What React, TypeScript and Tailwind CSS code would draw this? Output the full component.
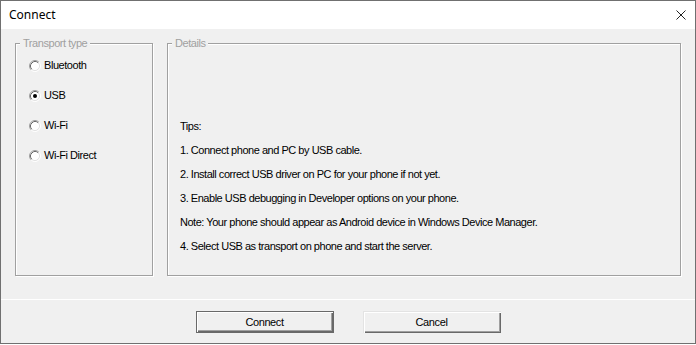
import React from "react";

const ui = { fontFamily: '"Liberation Sans", Arial, sans-serif' };

const Radio = ({ checked = false }: { checked?: boolean }) => (
  <svg width="12" height="12" viewBox="0 0 12 12" className="shrink-0">
    <circle cx="6" cy="6" r="4.5" fill="#fff" />
    <path d="M2.11 9.89 A5.5 5.5 0 0 1 9.89 2.11" fill="none" stroke="#a0a0a0" strokeWidth="1" />
    <path d="M9.89 2.11 A5.5 5.5 0 0 1 2.11 9.89" fill="none" stroke="#ffffff" strokeWidth="1" />
    <path d="M2.82 9.18 A4.5 4.5 0 0 1 9.18 2.82" fill="none" stroke="#696969" strokeWidth="1" />
    <path d="M9.18 2.82 A4.5 4.5 0 0 1 2.82 9.18" fill="none" stroke="#e3e3e3" strokeWidth="1" />
    {checked && <circle cx="6" cy="6" r="2" fill="#000" />}
  </svg>
);

const GroupBox = ({
  title,
  className,
  children,
}: {
  title: string;
  className?: string;
  children?: React.ReactNode;
}) => (
  <div
    className={`relative border border-[#a0a0a0] shadow-[1px_1px_0_#fff,inset_1px_1px_0_#fff] ${className ?? ""}`}
  >
    {/* caption sits over the top edge */}
    <span className="absolute -top-[8px] left-[4px] bg-[#f0f0f0] px-[3px] text-[11px] leading-[14px] tracking-[-0.45px] text-[#a0a0a0]">
      {title}
    </span>
    {children}
  </div>
);

const transports = ["Bluetooth", "USB", "Wi-Fi", "Wi-Fi Direct"];

const tips = [
  "Tips:",
  "1. Connect phone and PC by USB cable.",
  "2. Install correct USB driver on PC for your phone if not yet.",
  "3. Enable USB debugging in Developer options on your phone.",
  "Note: Your phone should appear as Android device in Windows Device Manager.",
  "4. Select USB as transport on phone and start the server.",
];

export default function App() {
  return (
    <div className="w-[696px] h-[345px] bg-white" style={ui}>
      <div className="w-[696px] h-[344px] border border-[#707070] bg-[#f0f0f0] flex flex-col">
        {/* Title bar */}
        <div className="h-[28px] bg-white flex items-center justify-between pl-[8px] pr-[8px] shrink-0">
          <span
            className="text-[12px] text-black"
            style={{ fontFamily: '"Noto Sans", "Open Sans", sans-serif' }}
          >
            Connect
          </span>
          <svg width="10" height="10" viewBox="0 0 10 10" className="mr-px">
            <path d="M0.5 0.5 L9.5 9.5 M9.5 0.5 L0.5 9.5" stroke="#222" strokeWidth="1" />
          </svg>
        </div>

        {/* Content */}
        <div className="flex gap-[14px] pl-[14px] pt-[14px] h-[270px] shrink-0">
          <GroupBox title="Transport type" className="w-[138px] h-[233px]">
            <div className="flex flex-col gap-[17px] pl-[13px] pt-[15px]">
              {transports.map((t) => (
                <label
                  key={t}
                  className="flex items-center h-[13px] gap-[3px] text-[11px] tracking-[-0.45px] text-black"
                >
                  <Radio checked={t === "USB"} />
                  <span>{t}</span>
                </label>
              ))}
            </div>
          </GroupBox>

          <GroupBox title="Details" className="w-[514px] h-[233px]">
            <div className="pl-[12px] pt-[70px] text-[11px] leading-[24px] tracking-[-0.47px] text-black">
              {tips.map((l) => (
                <div key={l}>{l}</div>
              ))}
            </div>
          </GroupBox>
        </div>

        {/* Separator */}
        <div className="h-px bg-white shrink-0" />

        {/* Buttons */}
        <div className="flex justify-center gap-[29px] pt-[11px]">
          <button className="w-[138px] h-[22px] border border-[#696969] bg-[#f0f0f0] text-[11px] tracking-[-0.4px] text-black shadow-[inset_1px_1px_0_#fff,inset_-1px_-1px_0_#696969,inset_-2px_-2px_0_#a0a0a0]">
            Connect
          </button>
          <button className="w-[138px] h-[22px] bg-[#f0f0f0] text-[11px] tracking-[-0.4px] text-black shadow-[inset_1px_1px_0_#e3e3e3,inset_2px_2px_0_#fff,inset_-1px_-1px_0_#696969,inset_-2px_-2px_0_#a0a0a0]">
            Cancel
          </button>
        </div>
      </div>
    </div>
  );
}
